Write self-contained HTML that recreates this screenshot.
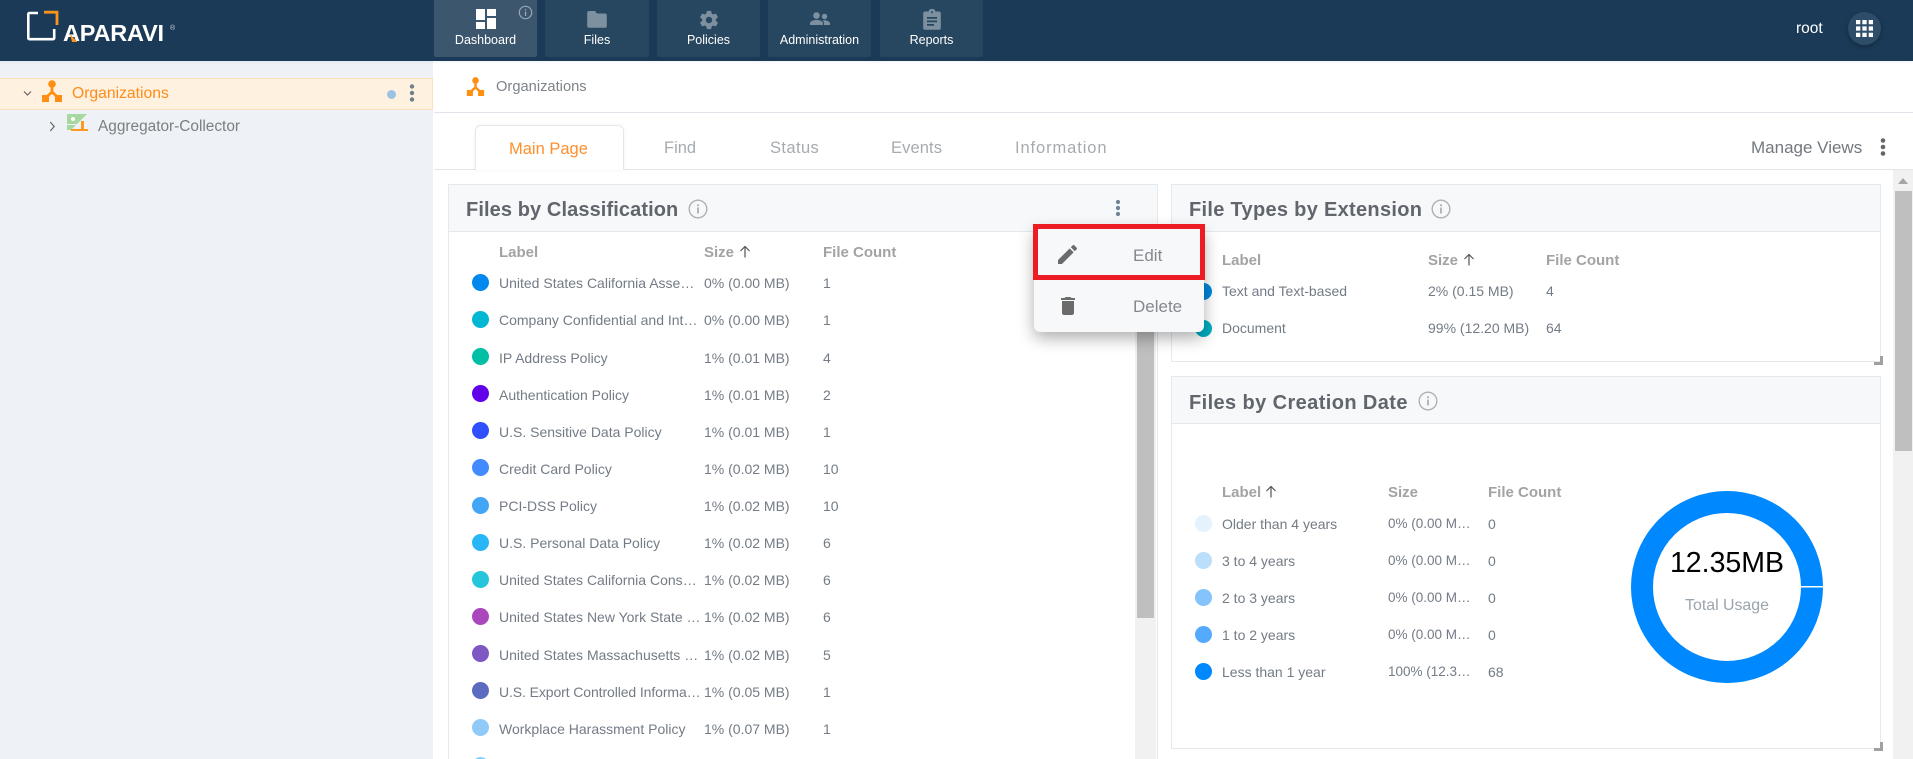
<!DOCTYPE html>
<html lang="en"><head><meta charset="utf-8"><title>Aparavi Dashboard</title>
<style>
*{box-sizing:border-box}
html,body{margin:0;padding:0;width:1913px;height:759px;overflow:hidden;background:#fff;font-family:"Liberation Sans",sans-serif}
#root{position:relative;width:1913px;height:759px;overflow:hidden}
.a{position:absolute}
.t{position:absolute;white-space:nowrap;line-height:20px;height:20px}
.nav{position:absolute;top:0;height:57px;background:#27465f;border-radius:0 0 2px 2px}
.nav span{position:absolute;left:0;right:0;top:30px;text-align:center;color:#fff;font-size:12.5px;line-height:20px}
.nav svg{position:absolute;left:50%;top:9px;transform:translateX(-50%)}
.card{position:absolute;border:1px solid #e4e9ee;background:#fff}
.chead{position:absolute;left:0;right:0;top:0;height:47px;background:#f7f8fa;border-bottom:1px solid #e4e9ee}
.title{position:absolute;white-space:nowrap;font-size:20px;line-height:24px;color:#61666c;font-weight:bold;letter-spacing:.1px}
.th{position:absolute;white-space:nowrap;font-size:15px;line-height:20px;color:#a3a3a3;font-weight:bold}
.td{position:absolute;white-space:nowrap;font-size:14px;line-height:20px;color:#737b85}
.dot{position:absolute;width:17px;height:17px;border-radius:50%}
.tab{position:absolute;white-space:nowrap;font-size:16.5px;line-height:20px;top:138px;color:#a6abb0}
</style></head><body><div id="root">

<!-- sidebar -->
<div class="a" style="left:0;top:61px;width:433px;height:698px;background:#eef1f5"></div>
<div class="a" style="left:0;top:78px;width:433px;height:32px;background:#fff1df;border:1px solid #ffdfb8;border-left:0"></div>
<svg class="a" style="left:23px;top:90px" width="9" height="7" viewBox="0 0 9 7"><path d="M1 1.5L4.5 5L8 1.5" fill="none" stroke="#666" stroke-width="1.2"/></svg>
<svg class="a" style="left:42px;top:80px" width="20" height="22" viewBox="0 0 20 22"><circle cx="10" cy="4" r="3.8" fill="#ff8f12"/><path d="M10 6v6M10 12L3.500 18M10 12l6.500 6" fill="none" stroke="#ff8f12" stroke-width="2.800"/><rect x="0" y="15" width="7" height="7" fill="#ff8f12"/><rect x="13" y="15" width="7" height="7" fill="#ff8f12"/></svg>
<div class="t" style="left:72px;top:84px;font-size:15.7px;color:#ff8c1a">Organizations</div>
<div class="a" style="left:387px;top:90px;width:9px;height:9px;border-radius:50%;background:#9cc2e3"></div>
<svg class="a" style="left:409px;top:83px" width="6" height="20" viewBox="0 0 6 20"><circle cx="3" cy="3.500" r="2.200" fill="#6f7f8c"/><circle cx="3" cy="10" r="2.200" fill="#6f7f8c"/><circle cx="3" cy="16.500" r="2.200" fill="#6f7f8c"/></svg>
<svg class="a" style="left:49px;top:121px" width="7" height="11" viewBox="0 0 7 11"><path d="M1.200 1l4 4.500-4 4.500" fill="none" stroke="#666" stroke-width="1.200"/></svg>
<svg class="a" style="left:67px;top:114px" width="21" height="18" viewBox="0 0 21 18"><path d="M0 0h20L10 10H0z" fill="#a6d8a0"/><path d="M0 11h9l-5 5H0z" fill="#a6d8a0"/><circle cx="6" cy="5" r="2" fill="#fff"/><path d="M14 7h3v8h4v2H4v-2h10z" fill="#ff9a1f"/></svg>
<div class="t" style="left:98px;top:117px;font-size:15.4px;color:#7c7f82">Aggregator-Collector</div>

<!-- header -->
<div class="a" style="left:0;top:0;width:1913px;height:61px;background:#1a3a57;box-shadow:0 1px 3px rgba(0,0,0,.06)"></div>
<svg class="a" style="left:27px;top:10px" width="32" height="32" viewBox="0 0 32 32"><path d="M11 3H2.500a1.200 1.200 0 0 0-1.200 1.200V28a1.200 1.200 0 0 0 1.200 1.200H26a1.200 1.200 0 0 0 1.200-1.200V19" fill="none" stroke="#fff" stroke-width="2.600"/><path d="M17 2.200H30V15" fill="none" stroke="#f7941d" stroke-width="2.800"/></svg>
<div class="t" style="left:63px;top:23px;font-size:23.500px;font-weight:bold;color:#fff;letter-spacing:-.2px">APARAVI</div>
<div class="t" style="left:170px;top:22px;font-size:7px;color:#cfd6dc;line-height:14px;height:14px">®</div>
<svg class="a" style="left:63px;top:30px" width="20" height="12" viewBox="0 0 20 12"><path d="M7 4l7.500 8H9z" fill="#f7941d"/></svg>

<div class="nav" style="left:434px;width:103px;background:#3c566e"><svg width="20" height="20" viewBox="0 0 20 20"><path d="M0 0h9v11H0zM0 13h9v7H0zM11 0h9v7h-9zM11 9h9v11h-9z" fill="#fff"/></svg><span>Dashboard</span></div>
<svg class="a" style="left:518px;top:5px" width="15" height="15" viewBox="0 0 15 15"><circle cx="7.500" cy="7.500" r="6.200" fill="none" stroke="#9aa8b4" stroke-width="1.200"/><rect x="6.900" y="6.500" width="1.300" height="4.500" fill="#9aa8b4"/><rect x="6.900" y="4" width="1.300" height="1.400" fill="#9aa8b4"/></svg>
<div class="nav" style="left:545px;width:104px"><svg width="20" height="20" viewBox="0 0 20 20"><path d="M2 2h6l2 2.500h8a1.800 1.800 0 0 1 1.800 1.800V17a1.800 1.800 0 0 1-1.800 1.800H2A1.800 1.800 0 0 1 .2 17V3.800A1.800 1.800 0 0 1 2 2z" fill="#7d909f"/></svg><span>Files</span></div>
<div class="nav" style="left:657px;width:103px"><svg width="22" height="22" viewBox="0 0 24 24"><path d="M19.430 12.980c.04-.32.07-.64.07-.98s-.03-.66-.07-.98l2.110-1.650c.19-.15.24-.42.120-.64l-2-3.460c-.12-.22-.39-.3-.61-.22l-2.490 1c-.52-.4-1.080-.73-1.690-.98l-.38-2.650A.488.488 0 0 0 14 2h-4c-.25 0-.46.18-.49.420l-.38 2.650c-.61.25-1.170.59-1.690.98l-2.490-1c-.23-.09-.49 0-.61.220l-2 3.460c-.13.22-.07.49.120.64l2.110 1.650c-.04.32-.07.65-.07.980s.03.660.07.980l-2.110 1.650c-.19.150-.24.420-.120.640l2 3.460c.120.220.390.300.610.220l2.490-1c.520.400 1.080.730 1.690.980l.380 2.650c.030.240.240.420.490.420h4c.250 0 .460-.180.490-.420l.380-2.650c.610-.250 1.170-.590 1.690-.980l2.490 1c.230.090.490 0 .610-.220l2-3.460c.120-.220.070-.490-.120-.640zM12 15.500a3.500 3.500 0 1 1 0-7 3.500 3.500 0 0 1 0 7z" fill="#7d909f"/></svg><span>Policies</span></div>
<div class="nav" style="left:768px;width:103px"><svg width="22" height="20" viewBox="0 0 22 20"><circle cx="7.500" cy="6.500" r="3.300" fill="#7d909f"/><circle cx="15.500" cy="7.500" r="2.700" fill="#7d909f"/><path d="M1 16v-1.500c0-2.500 4-3.600 6.500-3.600s6.500 1.100 6.500 3.600V16z" fill="#7d909f"/><path d="M15 16v-1.500c0-1.300-.6-2.300-1.500-3 .7-.2 1.400-.3 2-.3 2 0 5.500 1 5.500 3.300V16z" fill="#7d909f"/></svg><span>Administration</span></div>
<div class="nav" style="left:880px;width:103px"><svg width="20" height="22" viewBox="0 0 20 22"><path d="M3 2.500h3.500a3.600 3.600 0 0 1 7 0H17a1.800 1.800 0 0 1 1.800 1.800V19a1.800 1.800 0 0 1-1.800 1.800H3A1.800 1.800 0 0 1 1.200 19V4.300A1.800 1.800 0 0 1 3 2.500z" fill="#7d909f"/><path d="M5 8h10v1.800H5zM5 11.500h10v1.800H5zM5 15h7v1.800H5z" fill="#27465f"/><circle cx="10" cy="3.300" r="1" fill="#27465f"/></svg><span>Reports</span></div>

<div class="t" style="left:1796px;top:19px;font-size:15.500px;color:#fff">root</div>
<div class="a" style="left:1848px;top:12px;width:33px;height:33px;border-radius:50%;background:#2e4d68;box-shadow:0 2px 5px rgba(0,0,0,.25)"></div>
<svg class="a" style="left:1856px;top:20px" width="17" height="17" viewBox="0 0 17 17"><path d="M0 0h4.300v4.300H0zM6.350 0h4.300v4.300h-4.300zM12.700 0H17v4.300h-4.300zM0 6.350h4.300v4.300H0zM6.350 6.350h4.300v4.300h-4.300zM12.700 6.350H17v4.300h-4.300zM0 12.700h4.300V17H0zM6.350 12.700h4.300V17h-4.300zM12.700 12.700H17V17h-4.300z" fill="#fff"/></svg>

<!-- breadcrumb -->
<svg class="a" style="left:466px;top:77px" width="19" height="19" viewBox="0 0 20 22"><circle cx="10" cy="4" r="3.800" fill="#ff8f12"/><path d="M10 6v6M10 12L3.500 18M10 12l6.500 6" fill="none" stroke="#ff8f12" stroke-width="2.800"/><rect x="0" y="15" width="7" height="7" fill="#ff8f12"/><rect x="13" y="15" width="7" height="7" fill="#ff8f12"/></svg>
<div class="t" style="left:496px;top:77px;font-size:14.700px;color:#7d8388">Organizations</div>
<div class="a" style="left:434px;top:112px;width:1479px;height:1px;background:#dfe5ea"></div>

<!-- tabs -->
<div class="a" style="left:434px;top:169px;width:1479px;height:1px;background:#e2e6ea"></div>
<div class="a" style="left:475px;top:125px;width:149px;height:45px;background:#fff;border:1px solid #e4e8ec;border-bottom:0;border-radius:6px 6px 0 0;box-shadow:0 0 4px rgba(0,0,0,.06)"></div>
<div class="tab" style="left:509px;top:139px;color:#ff8f2b">Main Page</div>
<div class="tab" style="left:664px">Find</div>
<div class="tab" style="left:770px;letter-spacing:.4px">Status</div>
<div class="tab" style="left:891px;letter-spacing:.1px">Events</div>
<div class="tab" style="left:1015px;letter-spacing:.9px">Information</div>
<div class="tab" style="left:1751px;color:#72787e;font-size:17px">Manage Views</div>
<svg class="a" style="left:1879px;top:137px" width="8" height="20" viewBox="0 0 8 20"><circle cx="4" cy="3.500" r="2.300" fill="#666"/><circle cx="4" cy="10" r="2.300" fill="#666"/><circle cx="4" cy="16.500" r="2.300" fill="#666"/></svg>

<!-- page scrollbar -->
<div class="a" style="left:1893px;top:170px;width:20px;height:589px;background:#f1f1f1"></div>
<div class="a" style="left:1895px;top:191px;width:17px;height:260px;background:#bfbfbf"></div>
<svg class="a" style="left:1898px;top:178px" width="10" height="6" viewBox="0 0 10 6"><path d="M0 6L5 0l5 6z" fill="#a6a6a6"/></svg>

<!-- card 1 -->
<div class="card" style="left:448px;top:184px;width:710px;height:600px"><div class="chead"></div></div>
<div class="title" style="left:466px;top:198px">Files by Classification</div>
<svg class="a" style="left:688px;top:199px" width="20" height="20" viewBox="0 0 20 20"><circle cx="10" cy="10" r="8.800" fill="none" stroke="#adb1b5" stroke-width="1.400"/><rect x="9.100" y="8.500" width="1.800" height="6" fill="#adb1b5"/><rect x="9.100" y="5.300" width="1.800" height="1.900" fill="#adb1b5"/></svg>
<svg class="a" style="left:1115px;top:199px" width="6" height="18" viewBox="0 0 6 18"><circle cx="3" cy="3" r="2.100" fill="#6d8498"/><circle cx="3" cy="9" r="2.100" fill="#6d8498"/><circle cx="3" cy="15" r="2.100" fill="#6d8498"/></svg>

<div class="th" style="left:499px;top:243px">Label</div>
<div class="th" style="left:704px;top:243px">Size</div>
<svg class="a" style="left:739px;top:245px" width="12" height="13" viewBox="0 0 12 13"><path d="M6 12.500V1.500M1.500 6L6 1.500 10.500 6" fill="none" stroke="#555" stroke-width="1.200"/></svg>
<div class="th" style="left:823px;top:243px">File Count</div>

<div class="dot" style="left:472px;top:274px;background:#0088ee"></div><div class="td" style="left:499px;top:273px">United States California Asse…</div><div class="td" style="left:704px;top:273px">0% (0.00 MB)</div><div class="td" style="left:823px;top:273px">1</div>
<div class="dot" style="left:472px;top:311px;background:#00b8d4"></div><div class="td" style="left:499px;top:310px">Company Confidential and Int…</div><div class="td" style="left:704px;top:310px">0% (0.00 MB)</div><div class="td" style="left:823px;top:310px">1</div>
<div class="dot" style="left:472px;top:348px;background:#00bfa5"></div><div class="td" style="left:499px;top:348px">IP Address Policy</div><div class="td" style="left:704px;top:348px">1% (0.01 MB)</div><div class="td" style="left:823px;top:348px">4</div>
<div class="dot" style="left:472px;top:385px;background:#6200ea"></div><div class="td" style="left:499px;top:385px">Authentication Policy</div><div class="td" style="left:704px;top:385px">1% (0.01 MB)</div><div class="td" style="left:823px;top:385px">2</div>
<div class="dot" style="left:472px;top:422px;background:#304ffe"></div><div class="td" style="left:499px;top:422px">U.S. Sensitive Data Policy</div><div class="td" style="left:704px;top:422px">1% (0.01 MB)</div><div class="td" style="left:823px;top:422px">1</div>
<div class="dot" style="left:472px;top:459px;background:#448aff"></div><div class="td" style="left:499px;top:459px">Credit Card Policy</div><div class="td" style="left:704px;top:459px">1% (0.02 MB)</div><div class="td" style="left:823px;top:459px">10</div>
<div class="dot" style="left:472px;top:497px;background:#42a5f5"></div><div class="td" style="left:499px;top:496px">PCI-DSS Policy</div><div class="td" style="left:704px;top:496px">1% (0.02 MB)</div><div class="td" style="left:823px;top:496px">10</div>
<div class="dot" style="left:472px;top:534px;background:#29b6f6"></div><div class="td" style="left:499px;top:533px">U.S. Personal Data Policy</div><div class="td" style="left:704px;top:533px">1% (0.02 MB)</div><div class="td" style="left:823px;top:533px">6</div>
<div class="dot" style="left:472px;top:571px;background:#26c6da"></div><div class="td" style="left:499px;top:570px">United States California Cons…</div><div class="td" style="left:704px;top:570px">1% (0.02 MB)</div><div class="td" style="left:823px;top:570px">6</div>
<div class="dot" style="left:472px;top:608px;background:#ab47bc"></div><div class="td" style="left:499px;top:607px">United States New York State …</div><div class="td" style="left:704px;top:607px">1% (0.02 MB)</div><div class="td" style="left:823px;top:607px">6</div>
<div class="dot" style="left:472px;top:645px;background:#7e57c2"></div><div class="td" style="left:499px;top:645px">United States Massachusetts …</div><div class="td" style="left:704px;top:645px">1% (0.02 MB)</div><div class="td" style="left:823px;top:645px">5</div>
<div class="dot" style="left:472px;top:682px;background:#5c6bc0"></div><div class="td" style="left:499px;top:682px;letter-spacing:-.1px">U.S. Export Controlled Informa…</div><div class="td" style="left:704px;top:682px">1% (0.05 MB)</div><div class="td" style="left:823px;top:682px">1</div>
<div class="dot" style="left:472px;top:719px;background:#90caf9"></div><div class="td" style="left:499px;top:719px">Workplace Harassment Policy</div><div class="td" style="left:704px;top:719px">1% (0.07 MB)</div><div class="td" style="left:823px;top:719px">1</div>
<div class="dot" style="left:472px;top:757px;background:#81d4fa"></div>

<!-- card 1 scrollbar -->
<div class="a" style="left:1135px;top:232px;width:21px;height:527px;background:#f1f1f1"></div>
<div class="a" style="left:1137px;top:240px;width:17px;height:378px;background:#bfbfbf"></div>

<!-- card 2 -->
<div class="card" style="left:1171px;top:184px;width:710px;height:178px"><div class="chead"></div></div>
<div class="title" style="left:1189px;top:198px;letter-spacing:.3px">File Types by Extension</div>
<svg class="a" style="left:1431px;top:199px" width="20" height="20" viewBox="0 0 20 20"><circle cx="10" cy="10" r="8.800" fill="none" stroke="#adb1b5" stroke-width="1.400"/><rect x="9.100" y="8.500" width="1.800" height="6" fill="#adb1b5"/><rect x="9.100" y="5.300" width="1.800" height="1.900" fill="#adb1b5"/></svg>
<div class="th" style="left:1222px;top:251px">Label</div>
<div class="th" style="left:1428px;top:251px">Size</div>
<svg class="a" style="left:1463px;top:253px" width="12" height="13" viewBox="0 0 12 13"><path d="M6 12.500V1.500M1.500 6L6 1.500 10.500 6" fill="none" stroke="#555" stroke-width="1.200"/></svg>
<div class="th" style="left:1546px;top:251px">File Count</div>
<div class="dot" style="left:1195px;top:283px;background:#0086dd"></div><div class="td" style="left:1222px;top:281px">Text and Text-based</div><div class="td" style="left:1428px;top:281px">2% (0.15 MB)</div><div class="td" style="left:1546px;top:281px">4</div>
<div class="dot" style="left:1195px;top:320px;background:#00acc1"></div><div class="td" style="left:1222px;top:318px">Document</div><div class="td" style="left:1428px;top:318px">99% (12.20 MB)</div><div class="td" style="left:1546px;top:318px">64</div>
<svg class="a" style="left:1874px;top:356px" width="9" height="9" viewBox="0 0 9 9"><path d="M6 0h3v9H0V6h6z" fill="#a0a0a0"/></svg>

<!-- card 3 -->
<div class="card" style="left:1171px;top:376px;width:710px;height:373px"><div class="chead"></div></div>
<div class="title" style="left:1189px;top:391px;letter-spacing:.4px">Files by Creation Date</div>
<svg class="a" style="left:1418px;top:391px" width="20" height="20" viewBox="0 0 20 20"><circle cx="10" cy="10" r="8.800" fill="none" stroke="#adb1b5" stroke-width="1.400"/><rect x="9.100" y="8.500" width="1.800" height="6" fill="#adb1b5"/><rect x="9.100" y="5.300" width="1.800" height="1.900" fill="#adb1b5"/></svg>
<div class="th" style="left:1222px;top:483px">Label</div>
<svg class="a" style="left:1265px;top:485px" width="12" height="13" viewBox="0 0 12 13"><path d="M6 12.500V1.500M1.500 6L6 1.500 10.500 6" fill="none" stroke="#555" stroke-width="1.200"/></svg>
<div class="th" style="left:1388px;top:483px">Size</div>
<div class="th" style="left:1488px;top:483px">File Count</div>
<div class="dot" style="left:1195px;top:515px;background:#e3f2fd"></div><div class="td" style="left:1222px;top:514px">Older than 4 years</div><div class="td" style="left:1388px;top:514px;font-size:13.500px">0% (0.00 M…</div><div class="td" style="left:1488px;top:514px">0</div>
<div class="dot" style="left:1195px;top:552px;background:#bbdefb"></div><div class="td" style="left:1222px;top:551px">3 to 4 years</div><div class="td" style="left:1388px;top:551px;font-size:13.500px">0% (0.00 M…</div><div class="td" style="left:1488px;top:551px">0</div>
<div class="dot" style="left:1195px;top:589px;background:#84c3fc"></div><div class="td" style="left:1222px;top:588px">2 to 3 years</div><div class="td" style="left:1388px;top:588px;font-size:13.500px">0% (0.00 M…</div><div class="td" style="left:1488px;top:588px">0</div>
<div class="dot" style="left:1195px;top:626px;background:#54aaff"></div><div class="td" style="left:1222px;top:625px">1 to 2 years</div><div class="td" style="left:1388px;top:625px;font-size:13.500px">0% (0.00 M…</div><div class="td" style="left:1488px;top:625px">0</div>
<div class="dot" style="left:1195px;top:663px;background:#0088ff"></div><div class="td" style="left:1222px;top:662px">Less than 1 year</div><div class="td" style="left:1388px;top:662px;font-size:13.500px">100% (12.3…</div><div class="td" style="left:1488px;top:662px">68</div>
<svg class="a" style="left:1631px;top:491px" width="192" height="192" viewBox="0 0 192 192"><circle cx="96" cy="96" r="85" fill="none" stroke="#0088ff" stroke-width="22"/><rect x="170" y="95" width="22" height="1.500" fill="#fff"/></svg>
<div class="t" style="left:1627px;top:548px;width:200px;height:30px;line-height:30px;text-align:center;font-size:28.500px;color:#000">12.35MB</div>
<div class="t" style="left:1627px;top:596px;width:200px;text-align:center;font-size:15.900px;color:#9aa4ae">Total Usage</div>
<svg class="a" style="left:1874px;top:742px" width="9" height="9" viewBox="0 0 9 9"><path d="M6 0h3v9H0V6h6z" fill="#a0a0a0"/></svg>

<!-- menu -->
<div class="a" style="left:1034px;top:226px;width:170px;height:106px;background:#f7f8fa;border-radius:6px;box-shadow:0 6px 16px rgba(0,0,0,.32)"></div>
<svg class="a" style="left:1058px;top:245px" width="19" height="19" viewBox="3 3 18 18"><path d="M3 17.250V21h3.750L17.810 9.940l-3.750-3.750zM20.710 7.040a1 1 0 0 0 0-1.410l-2.340-2.340a1 1 0 0 0-1.410 0l-1.830 1.830 3.750 3.750z" fill="#6b6b6b"/></svg>
<div class="t" style="left:1133px;top:246px;font-size:17px;color:#85898e">Edit</div>
<svg class="a" style="left:1061px;top:297px" width="14" height="18" viewBox="5 3 14 18"><path d="M6 19c0 1.100.9 2 2 2h8c1.100 0 2-.9 2-2V7H6zM19 4h-3.500l-1-1h-5l-1 1H5v2h14z" fill="#6b6b6b"/></svg>
<div class="t" style="left:1133px;top:297px;font-size:17px;color:#85898e">Delete</div>
<div class="a" style="left:1033px;top:224px;width:172px;height:56px;border:5px solid #ed1c24"></div>

</div></body></html>
